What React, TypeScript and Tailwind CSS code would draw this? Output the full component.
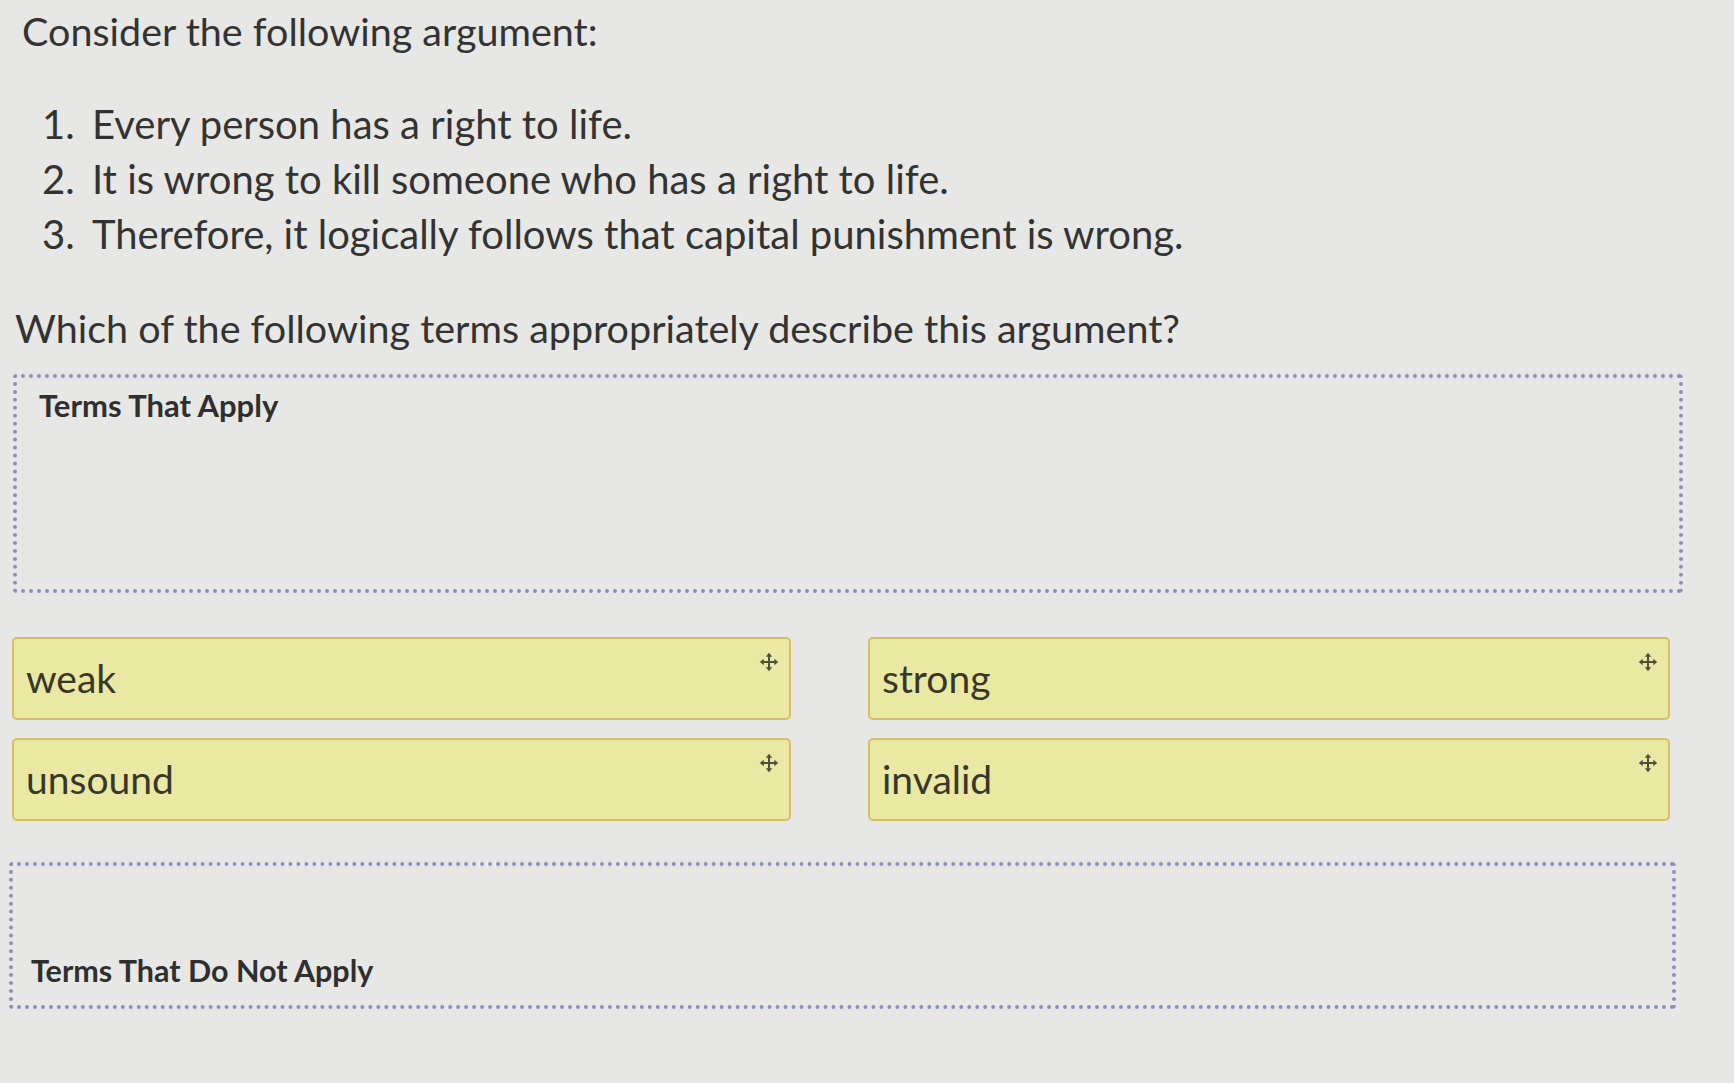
import React from "react";

const MoveIcon = () => (
  <svg width="20" height="20" viewBox="0 0 16 16" className="text-[#4f4f3e]" fill="currentColor">
    <path d="M8 3v10M3 8h10" stroke="currentColor" strokeWidth="1.6" />
    <path d="M8 0.6 10.6 3.8H5.4z" />
    <path d="M8 15.4 10.6 12.2H5.4z" />
    <path d="M0.6 8 3.8 5.4v5.2z" />
    <path d="M15.4 8 12.2 5.4v5.2z" />
  </svg>
);

const Term = ({ label }: { label: string }) => (
  <div className="relative flex h-[83px] items-center rounded-[5px] border-2 border-[#d6bf62] bg-[#e9e9a4] px-[12px]">
    <span className="text-[39px] leading-none text-[#38382a]">{label}</span>
    <span className="absolute right-[10px] top-[13px]">
      <MoveIcon />
    </span>
  </div>
);

const items = [
  "Every person has a right to life.",
  "It is wrong to kill someone who has a right to life.",
  "Therefore, it logically follows that capital punishment is wrong.",
];

export default function App() {
  return (
    <div className="min-h-screen w-full bg-[#e7e7e5] pb-10 font-['Lato','Open_Sans',sans-serif] text-[#333333]">
      <p className="pl-[22px] pt-[9px] text-[39.5px] leading-[44px]">Consider the following argument:</p>

      <ol className="mt-[44px] text-[40px] leading-[55px]">
        {items.map((t, i) => (
          <li key={i} className="flex">
            <span className="w-[92px] pl-[42px]">{i + 1}.</span>
            <span>{t}</span>
          </li>
        ))}
      </ol>

      <p className="mt-[44px] pl-[15px] text-[39.5px] leading-[44px]">
        Which of the following terms appropriately describe this argument?
      </p>

      <div className="ml-[13px] mt-[24px] h-[219px] w-[1670px] rounded-[4px] border-4 border-dotted border-[#8a8fc0] pl-[22px] pt-[8px]">
        <h3 className="text-[31px] font-bold leading-[38px] text-[#2f2f2f]">Terms That Apply</h3>
      </div>

      <div className="ml-[12px] mt-[44px] grid w-[1658px] grid-cols-[779px_802px] gap-x-[77px] gap-y-[18px]">
        <Term label="weak" />
        <Term label="strong" />
        <Term label="unsound" />
        <Term label="invalid" />
      </div>

      <div className="ml-[9px] mt-[41px] flex h-[147px] w-[1667px] flex-col justify-end rounded-[4px] border-4 border-dotted border-[#8a8fc0] pb-[16px] pl-[18px]">
        <h3 className="text-[30.5px] font-bold leading-[38px] text-[#2f2f2f]">Terms That Do Not Apply</h3>
      </div>
    </div>
  );
}
